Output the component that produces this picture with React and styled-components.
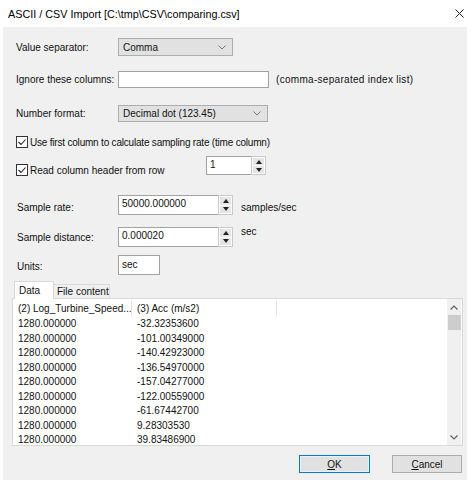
import React from 'react';
import styled, { createGlobalStyle } from 'styled-components';

const GlobalStyle = createGlobalStyle`
  html, body { margin: 0; padding: 0; background: #fff; }
  body {
    font-family: "Liberation Sans", Arial, sans-serif;
    font-size: 10px;
    color: #111;
  }
  * { box-sizing: border-box; }
`;

const Window = styled.div`
  width: 474px;
  height: 483px;
  background: #fff;
  display: flex;
  flex-direction: column;
  overflow: hidden;
`;

const TitleBar = styled.div`
  height: 27px;
  flex: none;
  display: flex;
  align-items: center;
  justify-content: space-between;
  padding: 0 10px 0 8px;
  font-size: 10.8px;
  color: #000;
`;

const Client = styled.div`
  margin: 0 7px 0 3px;
  height: 453px;
  flex: none;
  background: #f0f0f0;
  padding: 0 5px 0 13px;
  display: flex;
  flex-direction: column;
`;

const Row = styled.div`
  display: flex;
  align-items: ${({ $align }) => $align || 'center'};
  margin-top: ${({ $mt }) => $mt}px;
  height: ${({ $h }) => $h}px;
  flex: none;
`;

const Label = styled.div`
  width: ${({ $w }) => $w || 102}px;
  padding-left: ${({ $indent }) => $indent || 0}px;
  flex: none;
  white-space: nowrap;
  margin-top: ${({ $dy }) => $dy || 0}px;
`;

const Combo = styled.div`
  width: ${({ $w }) => $w}px;
  height: 100%;
  background: #e1e1e1;
  border: 1px solid #adadad;
  display: flex;
  align-items: center;
  justify-content: space-between;
  padding: 0 6px 0 4px;
`;

const TextBox = styled.div`
  width: ${({ $w }) => $w}px;
  height: 100%;
  background: #fff;
  border: 1px solid #a2a2a2;
  padding: 3px 0 0 3px;
  line-height: 12px;
`;

const Note = styled.div`
  margin-left: ${({ $ml }) => $ml}px;
  white-space: nowrap;
  align-self: ${({ $self }) => $self || 'auto'};
  margin-top: ${({ $dy }) => $dy || 0}px;
  letter-spacing: ${({ $ls }) => $ls || 0}px;
`;

const Spin = styled.div`
  width: ${({ $w }) => $w}px;
  height: 100%;
  display: flex;
  margin-left: ${({ $ml }) => $ml || 0}px;
`;

const SpinField = styled.div`
  flex: 1;
  background: #fff;
  border: 1px solid #a2a2a2;
  border-right: none;
  padding: 2px 0 0 3px;
  line-height: 12px;
`;

const SpinButtons = styled.div`
  width: 15px;
  display: flex;
  flex-direction: column;
  border: 1px solid #c9c9c9;
  background: #fff;
  padding: 1px;
  gap: 1px;
`;

const SpinHalf = styled.div`
  flex: 1;
  background: #e5e5e5;
  display: flex;
  align-items: center;
  justify-content: center;
`;

const CheckRow = styled.label`
  display: flex;
  align-items: center;
  gap: 2px;
  width: ${({ $w }) => $w || 'auto'}px;
  flex: none;
  white-space: nowrap;
  align-self: ${({ $self }) => $self || 'auto'};
  margin-bottom: ${({ $mb }) => $mb || 0}px;
  letter-spacing: ${({ $ls }) => $ls || 0}px;
`;

const TabArea = styled.div`
  margin: 7px 0 0 -4px;
  width: 451px;
  display: flex;
  flex-direction: column;
  flex: none;
`;

const TabStrip = styled.div`
  display: flex;
  align-items: flex-end;
  height: 17px;
  padding-left: 2px;
  margin-bottom: -1px;
  position: relative;
  z-index: 1;
`;

const Tab = styled.div`
  height: ${({ $active }) => ($active ? 18 : 15)}px;
  width: ${({ $w }) => $w}px;
  background: ${({ $active }) => ($active ? '#fff' : '#f0f0f0')};
  border: 1px solid #d9d9d9;
  border-bottom: ${({ $active }) => ($active ? 'none' : '1px solid #d9d9d9')};
  border-left: ${({ $first }) => ($first ? '1px solid #d9d9d9' : 'none')};
  padding: ${({ $active }) => ($active ? '3px 0 0 4px' : '1px 0 0 3px')};
  line-height: 12px;
`;

const Panel = styled.div`
  height: 148px;
  border: 1px solid #d9d9d9;
  background: #fff;
  display: flex;
  overflow: hidden;
`;

const List = styled.div`
  flex: 1;
  padding-top: 2px;
  display: flex;
  flex-direction: column;
  overflow: hidden;
`;

const HeaderRow = styled.div`
  display: flex;
  height: 16px;
  flex: none;
`;

const HeaderCell = styled.div`
  width: ${({ $w }) => $w}px;
  padding-left: 5px;
  border-right: 1px solid #e5e5e5;
  line-height: 16px;
  white-space: nowrap;
`;

const DataRow = styled.div`
  display: flex;
  height: 14.5px;
  flex: none;
  line-height: 14.5px;
`;

const Cell = styled.div`
  width: ${({ $w }) => $w}px;
  padding-left: 5px;
  white-space: nowrap;
`;

const ScrollBar = styled.div`
  width: 14px;
  margin: 0 1px 0 0;
  background: #f0f0f0;
  display: flex;
  flex-direction: column;
  align-items: stretch;
`;

const ScrollArrow = styled.div`
  height: 16px;
  display: flex;
  align-items: center;
  justify-content: center;
`;

const Thumb = styled.div`
  height: 15px;
  margin: 0 0 0 1px;
  background: #cdcdcd;
`;

const Spacer = styled.div`
  flex: 1;
`;

const Footer = styled.div`
  margin-top: 9px;
  display: flex;
  justify-content: flex-end;
  gap: 22px;
  height: 18px;
`;

const Button = styled.button`
  width: ${({ $w }) => $w}px;
  height: 18px;
  font: inherit;
  color: #111;
  background: #e1e1e1;
  border: 1px solid ${({ $default }) => ($default ? '#0078d7' : '#adadad')};
  box-shadow: ${({ $default }) => ($default ? 'inset 0 0 0 1px #e8f1fa' : 'none')};
  padding: 0;
  u { text-decoration: underline; }
`;

const Chevron = () => (
  <svg width="8" height="5" viewBox="0 0 8 5">
    <polyline points="0.5,0.5 4,4 7.5,0.5" fill="none" stroke="#777" strokeWidth="1" />
  </svg>
);

const Arrow = ({ up }) => (
  <svg width="6" height="4" viewBox="0 0 6 4">
    <polygon points={up ? '3,0 6,4 0,4' : '0,0 6,0 3,4'} fill="#222" />
  </svg>
);

const ScrollChevron = ({ up }) => (
  <svg width="8" height="5" viewBox="0 0 8 5">
    <polyline
      points={up ? '0.5,4.5 4,1 7.5,4.5' : '0.5,0.5 4,4 7.5,0.5'}
      fill="none"
      stroke="#606060"
      strokeWidth="1.2"
    />
  </svg>
);

const CheckBox = () => (
  <svg width="12" height="12" viewBox="0 0 12 12">
    <rect x="0.5" y="0.5" width="11" height="11" fill="#fff" stroke="#333" />
    <polyline points="2.5,6 5,8.5 9.5,3.5" fill="none" stroke="#222" strokeWidth="1.1" />
  </svg>
);

const Spinner = ({ value, w, ml }) => (
  <Spin $w={w} $ml={ml}>
    <SpinField>{value}</SpinField>
    <SpinButtons>
      <SpinHalf><Arrow up /></SpinHalf>
      <SpinHalf><Arrow /></SpinHalf>
    </SpinButtons>
  </Spin>
);

const rows = [
  ['1280.000000', '-32.32353600'],
  ['1280.000000', '-101.00349000'],
  ['1280.000000', '-140.42923000'],
  ['1280.000000', '-136.54970000'],
  ['1280.000000', '-157.04277000'],
  ['1280.000000', '-122.00559000'],
  ['1280.000000', '-61.67442700'],
  ['1280.000000', '9.28303530'],
  ['1280.000000', '39.83486900'],
];

export default function App() {
  return (
    <>
      <GlobalStyle />
      <Window>
        <TitleBar>
          <span>ASCII / CSV Import [C:\tmp\CSV\comparing.csv]</span>
          <svg width="9" height="9" viewBox="0 0 9 9">
            <path d="M0.5 0.5 L8.5 8.5 M8.5 0.5 L0.5 8.5" stroke="#222" strokeWidth="1" />
          </svg>
        </TitleBar>
        <Client>
          <Row $mt={11} $h={18}>
            <Label>Value separator:</Label>
            <Combo $w={115}>
              <span>Comma</span>
              <Chevron />
            </Combo>
          </Row>
          <Row $mt={15} $h={17}>
            <Label>Ignore these columns:</Label>
            <TextBox $w={151} />
            <Note $ml={7} $ls={0.3}>(comma-separated index list)</Note>
          </Row>
          <Row $mt={17} $h={17}>
            <Label>Number format:</Label>
            <Combo $w={150}>
              <span>Decimal dot (123.45)</span>
              <Chevron />
            </Combo>
          </Row>
          <Row $mt={13} $h={14}>
            <CheckRow $ls={-0.2}>
              <CheckBox />
              <span>Use first column to calculate sampling rate (time column)</span>
            </CheckRow>
          </Row>
          <Row $mt={7} $h={19}>
            <CheckRow $w={190} $self="flex-end" $mb={-1}>
              <CheckBox />
              <span>Read column header from row</span>
            </CheckRow>
            <Spinner value="1" w={60} />
          </Row>
          <Row $mt={20} $h={20}>
            <Label $indent={1} $dy={4}>Sample rate:</Label>
            <Spinner value="50000.000000" w={115} />
            <Note $ml={8} $dy={4}>samples/sec</Note>
          </Row>
          <Row $mt={12} $h={20}>
            <Label $indent={1}>Sample distance:</Label>
            <Spinner value="0.000020" w={115} />
            <Note $ml={8} $self="flex-start" $dy={-1}>sec</Note>
          </Row>
          <Row $mt={8} $h={20}>
            <Label $indent={1} $dy={2}>Units:</Label>
            <TextBox $w={42}>sec</TextBox>
          </Row>
          <TabArea>
            <TabStrip>
              <Tab $active $first $w={40}>Data</Tab>
              <Tab $w={56}>File content</Tab>
            </TabStrip>
            <Panel>
              <List>
                <HeaderRow>
                  <HeaderCell $w={119}>(2) Log_Turbine_Speed...</HeaderCell>
                  <HeaderCell $w={145}>(3) Acc (m/s2)</HeaderCell>
                </HeaderRow>
                {rows.map(([a, b], i) => (
                  <DataRow key={i}>
                    <Cell $w={119}>{a}</Cell>
                    <Cell $w={145}>{b}</Cell>
                  </DataRow>
                ))}
              </List>
              <ScrollBar>
                <ScrollArrow><ScrollChevron up /></ScrollArrow>
                <Thumb />
                <Spacer />
                <ScrollArrow><ScrollChevron /></ScrollArrow>
              </ScrollBar>
            </Panel>
          </TabArea>
          <Footer>
            <Button $w={71} $default><u>O</u>K</Button>
            <Button $w={70}><u>C</u>ancel</Button>
          </Footer>
        </Client>
      </Window>
    </>
  );
}
